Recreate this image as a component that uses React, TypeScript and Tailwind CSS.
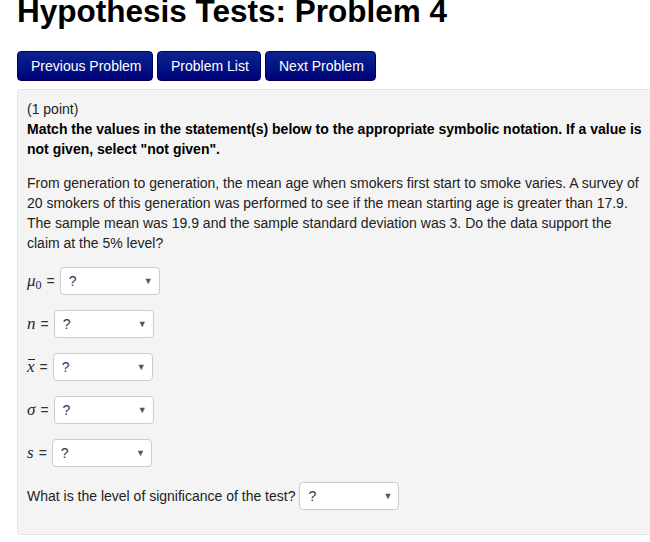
import React from "react";

function Sel({ w = 100 }: { w?: number }) {
  return (
    <div
      className="flex h-[28px] items-center justify-between rounded-[4px] border border-[#cccccc] bg-white pl-[8px] pr-[6px]"
      style={{ width: w }}
    >
      <span className="text-[14px] text-[#333355]">?</span>
      <span className="text-[9px] text-[#555555]">▼</span>
    </div>
  );
}

function MathLabel({ children }: { children: React.ReactNode }) {
  return (
    <span className="flex items-baseline gap-[5px] pr-[5px]">
      <span className="font-['Liberation_Serif',serif] text-[17px] italic text-[#222244]">{children}</span>
      <span className="text-[14px] text-[#333]">=</span>
    </span>
  );
}

export default function App() {
  const btn =
    "h-[30px] whitespace-nowrap rounded-[4px] bg-gradient-to-b from-[#0c238f] to-[#00007a] px-[13px] text-[14px] text-white border border-[#00005a]";
  return (
    <div className="h-[542px] w-[650px] overflow-hidden bg-white font-['Liberation_Sans',Arial,sans-serif] text-[#222]">
      <div className="pl-[17px]">
        <h1 className="mt-[-9px] h-[37px] whitespace-nowrap text-[31.5px] font-bold leading-[40px] text-black">
          Hypothesis Tests: Problem 4
        </h1>
        <div className="mt-[23px] flex gap-[4px]">
          <button className={`${btn} w-[136px]`}>Previous Problem</button>
          <button className={`${btn} w-[104px]`}>Problem List</button>
          <button className={`${btn} w-[111px]`}>Next Problem</button>
        </div>
        <div className="mt-[8px] w-[660px] rounded-[4px] border border-[#e3e3e3] bg-[#f4f4f4] pb-[24px] pl-[9px] pt-[9px] text-[14px] leading-[20px]">
          <div>(1 point)</div>
          <div className="font-bold text-black">
            Match the values in the statement(s) below to the appropriate symbolic notation. If a value is
            <br />
            not given, select "not given".
          </div>
          <p className="mt-[14px] w-[620px]">
            From generation to generation, the mean age when smokers first start to smoke varies. A survey of
            <br />
            20 smokers of this generation was performed to see if the mean starting age is greater than 17.9.
            <br />
            The sample mean was 19.9 and the sample standard deviation was 3. Do the data support the
            <br />
            claim at the 5% level?
          </p>
          <div className="mt-[14px] flex flex-col gap-[15px]">
            <div className="flex items-center">
              <MathLabel>
                μ<sub className="text-[12px] not-italic">0</sub>
              </MathLabel>
              <Sel />
            </div>
            <div className="flex items-center">
              <MathLabel>n</MathLabel>
              <Sel />
            </div>
            <div className="flex items-center">
              <MathLabel>
                <span className="relative italic">
                  x
                  <span className="absolute left-[1px] top-[2px] h-[1px] w-[7px] bg-[#222244]" />
                </span>
              </MathLabel>
              <Sel />
            </div>
            <div className="flex items-center">
              <MathLabel>σ</MathLabel>
              <Sel />
            </div>
            <div className="flex items-center">
              <MathLabel>s</MathLabel>
              <Sel />
            </div>
            <div className="flex items-center gap-[4px]">
              <span>What is the level of significance of the test?</span>
              <Sel />
            </div>
          </div>
        </div>
      </div>
    </div>
  );
}
